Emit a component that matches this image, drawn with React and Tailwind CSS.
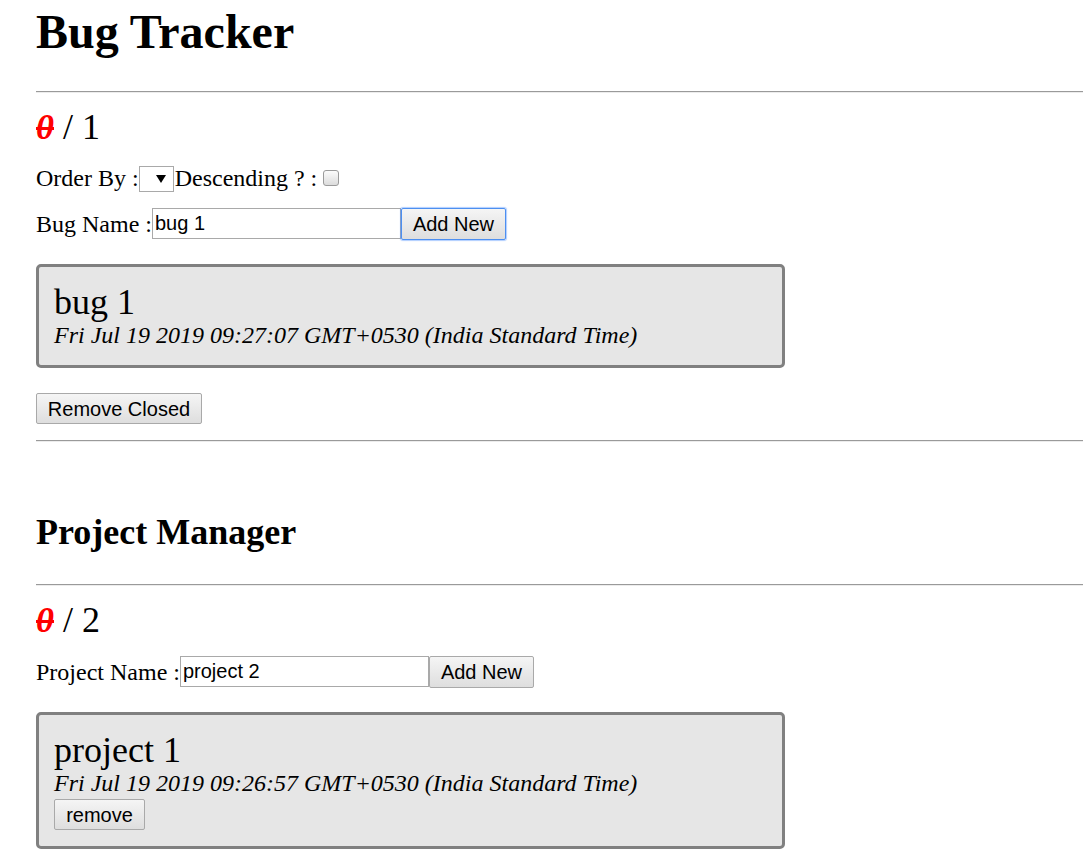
import { useState } from "react";

const Rule = () => (
  <div className="h-[2px] w-full border-t border-[#9a9a9a] bg-[#ececec]" />
);

const Btn = ({ children, className = "", focused = false }) => (
  <button
    type="button"
    className={
      "flex items-center justify-center whitespace-nowrap px-0 rounded-[2px] bg-linear-to-b from-[#f5f5f5] to-[#dedede] text-[20px] leading-[24px] text-black font-['Liberation_Sans',Arial,sans-serif] " +
      (focused
        ? "border border-[#4d8ff0] shadow-[0_0_1px_1px_rgba(77,144,254,0.45)] "
        : "border border-[#a9a9a9] ") +
      className
    }
  >
    {children}
  </button>
);

const Counter = ({ total }) => (
  <div className="mt-[13px] text-[36px] leading-[42px]">
    <span className="font-bold italic text-[#ff0000] line-through">0</span>{" "}
    / {total}
  </div>
);

const NameRow = ({ label, value, focused }) => (
  <div className="flex items-start">
    <span className="mt-[2px] text-[24px] leading-[28px]">{label}</span>
    <input
      type="text"
      defaultValue={value}
      className="h-[31px] w-[249px] border border-[#a9a9a9] bg-white pl-[2px] text-[20px] text-black outline-none font-['Liberation_Sans',Arial,sans-serif]"
    />
    <Btn focused={focused} className="h-[32px] w-[105px]">
      Add New
    </Btn>
  </div>
);

const Card = ({ title, date, children }) => (
  <div className="w-[749px] rounded-[5px] border-[3px] border-[#808080] bg-[#e6e6e6] pl-[15px] pt-[15px] pb-[16px]">
    <div className="text-[36px] leading-[40px]">{title}</div>
    <div className="text-[24px] leading-[27px] italic">{date}</div>
    {children}
  </div>
);

const App = () => {
  const [descending, setDescending] = useState(false);

  return (
    <div className="min-h-screen bg-white pl-[36px] text-black font-['Liberation_Serif','Times_New_Roman',serif]">
      <h1 className="mt-[4px] text-[48px] leading-[56px] font-bold">
        Bug Tracker
      </h1>
      <div className="mt-[31px]">
        <Rule />
      </div>
      <Counter total={1} />

      <div className="mt-[16px] flex items-start">
        <span className="text-[24px] leading-[28px]">Order By :</span>
        <div className="mt-[2px] flex h-[26px] w-[35px] items-center justify-end border border-[#a9a9a9] bg-white pr-[7px]">
          <svg width="10" height="8" viewBox="0 0 10 8">
            <polygon points="0,0 10,0 5,8" fill="#000" />
          </svg>
        </div>
        <span className="ml-[1px] text-[24px] leading-[28px]">
          Descending ? :
        </span>
        <input
          type="checkbox"
          checked={descending}
          onChange={(e) => setDescending(e.target.checked)}
          className="ml-[6px] mt-[6px] h-[16px] w-[16px] appearance-none rounded-[3px] border border-[#9b9b9b] bg-linear-to-b from-[#fcfcfc] to-[#dcdcdc]"
        />
      </div>

      <div className="mt-[16px]">
        <NameRow label="Bug Name :" value="bug 1" focused />
      </div>

      <div className="mt-[24px]">
        <Card
          title="bug 1"
          date="Fri Jul 19 2019 09:27:07 GMT+0530 (India Standard Time)"
        />
      </div>

      <div className="mt-[25px]">
        <Btn className="h-[31px] w-[166px]">Remove Closed</Btn>
      </div>
      <div className="mt-[16px]">
        <Rule />
      </div>

      <h2 className="mt-[69px] text-[36px] leading-[42px] font-bold">
        Project Manager
      </h2>
      <div className="mt-[31px]">
        <Rule />
      </div>
      <Counter total={2} />

      <div className="mt-[15px]">
        <NameRow label="Project Name :" value="project 2" />
      </div>

      <div className="mt-[24px]">
        <Card
          title="project 1"
          date="Fri Jul 19 2019 09:26:57 GMT+0530 (India Standard Time)"
        >
          <Btn className="mt-[2px] h-[31px] w-[91px]">remove</Btn>
        </Card>
      </div>
    </div>
  );
};

export default App;
